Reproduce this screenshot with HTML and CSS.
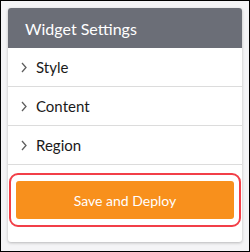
FILE: index.html
```html
<!DOCTYPE html>
<html>
<head>
<meta charset="utf-8">
<link rel="stylesheet" href="styles.css">
</head>
<body>
<div class="frame">
  <div class="card">
    <div class="header">Widget Settings</div>
    <div class="row">
      <svg class="chev" width="6" height="11" viewBox="0 0 6 11"><path d="M1 1 L5 5.5 L1 10" fill="none" stroke="#5f5f5f" stroke-width="1.3"/></svg>
      <span>Style</span>
    </div>
    <div class="row">
      <svg class="chev" width="6" height="11" viewBox="0 0 6 11"><path d="M1 1 L5 5.5 L1 10" fill="none" stroke="#5f5f5f" stroke-width="1.3"/></svg>
      <span>Content</span>
    </div>
    <div class="row">
      <svg class="chev" width="6" height="11" viewBox="0 0 6 11"><path d="M1 1 L5 5.5 L1 10" fill="none" stroke="#5f5f5f" stroke-width="1.3"/></svg>
      <span>Region</span>
    </div>
    <div class="highlight">
      <div class="btn">Save and Deploy</div>
    </div>
  </div>
</div>
</body>
</html>
```
FILE: styles.css
```css
html, body { margin: 0; padding: 0; }
body { font-family: Lato, "Open Sans", sans-serif; }
.frame {
  width: 250px; height: 252px; box-sizing: border-box;
  border: 1px solid #000;
  background: #f4f4f6;
  padding: 7px 8px 0 7px;
}
.card {
  width: 234px; height: 234px; box-sizing: border-box;
  background: #fff;
  border-radius: 3px;
  box-shadow: 0 1px 3px rgba(0,0,0,0.25);
  overflow: hidden;
}
.header {
  height: 40px; background: #6b6e77; color: #fff;
  font-size: 16px; display: flex; align-items: center;
  padding-left: 17px;
}
.row {
  height: 38px; border-bottom: 1px solid #dcdcdc;
  display: flex; align-items: center;
  padding-left: 13px; font-size: 15px; color: #1a1a1a;
}
.chev { margin-right: 9px; }
.highlight {
  margin: 8px 1px 0 1px;
  border: 2px solid #f23f48;
  border-radius: 9px;
  padding: 6px 5px;
}
.btn {
  height: 38px; background: #f8901c; color: #fff;
  border-radius: 3px; font-size: 14px;
  display: flex; align-items: center; justify-content: center;
}
```
